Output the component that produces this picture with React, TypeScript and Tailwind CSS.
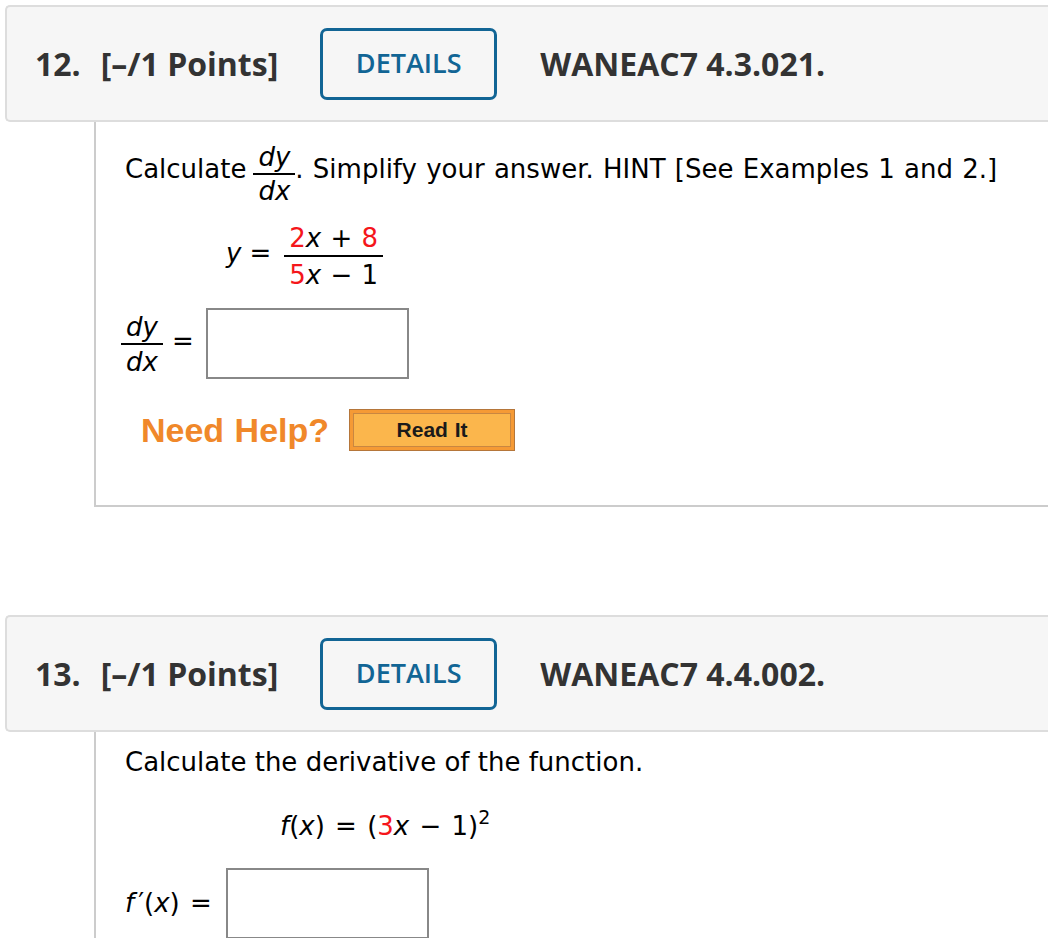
import React from 'react';

const body = { fontFamily: '"DejaVu Sans", Verdana, sans-serif' };
const head = { fontFamily: '"Open Sans", "Liberation Sans", sans-serif' };
const arial = { fontFamily: '"Liberation Sans", Arial, sans-serif' };

function Header({ num, code }: { num: string; code: string }) {
    return (
        <div className="h-[117px] border-2 border-r-0 border-[#dddddd] bg-[#f6f6f6] rounded-l-[5px] flex items-center pl-[28px] text-[#333333]" style={head}>
            <span className="text-[32px] font-bold">{num}</span>
            <span className="text-[32px] font-bold ml-[20px]">[–/1 Points]</span>
            <button className="ml-[42px] w-[177px] h-[72px] border-[3px] border-[#126595] rounded-[7px] text-[27px] font-semibold text-[#126595] flex items-center justify-center">
                DETAILS
            </button>
            <span className="text-[32px] font-bold ml-[43px]">{code}</span>
        </div>
    );
}

function Frac({ top, bottom, h = 'h-[33px]' }: { top: React.ReactNode; bottom: React.ReactNode; h?: string }) {
    return (
        <span className="inline-flex flex-col items-stretch">
            <span className={`${h} flex items-center justify-center px-[5px] border-b-2 border-black`}>{top}</span>
            <span className={`${h} flex items-center justify-center px-[5px]`}>{bottom}</span>
        </span>
    );
}

const Red = ({ children }: { children: React.ReactNode }) => <span className="text-[#f5161b]">{children}</span>;

export default function App() {
    return (
        <div className="w-full h-[938px] overflow-hidden bg-white pl-[5px] pt-[5px] text-black" style={body}>
            <Header num="12." code="WANEAC7 4.3.021." />
            <div className="ml-[89px] h-[385px] border-l-2 border-b-2 border-[#cccccc] pl-[29px] pt-[17px] text-[26px] [word-spacing:1px]">
                <div className="flex items-center h-[68px]">
                    <span className="mb-[8px]">Calculate</span>
                    <span className="ml-[7px]">
                        <Frac top={<i>dy</i>} bottom={<i>dx</i>} />
                    </span>
                    <span className="mb-[8px]">. Simplify your answer. HINT [See Examples 1 and 2.]</span>
                </div>
                <div className="flex items-center h-[74px] mt-[12px] pl-[101px]">
                    <i className="mb-[6px]">y</i>
                    <span className="ml-[8px] mb-[6px]">=</span>
                    <span className="ml-[13px]">
                        <Frac h="h-[36px]" top={<span className="whitespace-pre"><Red>2</Red><i>x</i> + <Red>8</Red></span>} bottom={<span className="whitespace-pre"><Red>5</Red><i>x</i> − 1</span>} />
                    </span>
                </div>
                <div className="flex items-center h-[71px] mt-[15px]">
                    <span className="-ml-[4px]">
                        <Frac h="h-[34px]" top={<i>dy</i>} bottom={<i>dx</i>} />
                    </span>
                    <span className="ml-[9px] mb-[4px]">=</span>
                    <div className="ml-[12px] w-[203px] h-[71px] border-2 border-[#888888] bg-white" />
                </div>
                <div className="flex items-center mt-[30px] h-[42px] pl-[16px]">
                    <span className="text-[34px] font-bold text-[#f0882a]" style={arial}>Need Help?</span>
                    <div className="ml-[20px] w-[166px] h-[42px] border border-[#b5763a] bg-[#f59a35] p-[3px]">
                        <div className="w-full h-full border border-[#c98741] bg-[#fbb64c] flex items-center justify-center text-[21px] font-bold text-[#1a1a1a]" style={arial}>
                            Read It
                        </div>
                    </div>
                </div>
            </div>

            <div className="mt-[108px]">
                <Header num="13." code="WANEAC7 4.4.002." />
            </div>
            <div className="ml-[89px] h-[300px] border-l-2 border-[#cccccc] pl-[29px] pt-[15px] text-[26px]">
                <div className="h-[30px] leading-[30px]">Calculate the derivative of the function.</div>
                <div className="h-[30px] leading-[30px] mt-[34px] pl-[155px] whitespace-pre [word-spacing:2px]">
                    <i>f</i>(<i>x</i>) = (<Red>3</Red><i>x</i> − 1)<sup className="text-[19px] -top-[11px]">2</sup>
                </div>
                <div className="flex items-center mt-[27px] h-[71px]">
                    <span className="whitespace-pre [word-spacing:2px]"><i className="pr-[4px]">f</i>′(<i>x</i>) =</span>
                    <div className="ml-[14px] w-[203px] h-[71px] border-2 border-[#888888] bg-white" />
                </div>
            </div>
        </div>
    );
}
